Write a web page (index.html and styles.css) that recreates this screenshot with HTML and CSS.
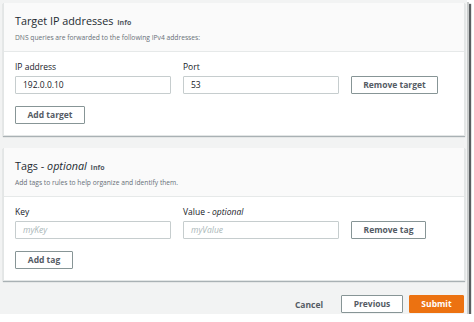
FILE: index.html
```html
<!DOCTYPE html>
<html>
<head>
<meta charset="utf-8">
<link rel="stylesheet" href="styles.css">
</head>
<body>
<div class="frame">
  <section class="card">
    <header class="card-header">
      <h2 class="title">Target IP addresses <span class="info">Info</span></h2>
      <p class="desc">DNS queries are forwarded to the following IPv4 addresses:</p>
    </header>
    <div class="card-body">
      <div class="row">
        <div class="field">
          <label class="label">IP address</label>
          <div class="input">192.0.0.10</div>
        </div>
        <div class="field">
          <label class="label">Port</label>
          <div class="input">53</div>
        </div>
        <button class="btn btn-remove-target">Remove target</button>
      </div>
      <button class="btn btn-add-target">Add target</button>
    </div>
  </section>

  <section class="card card-tags">
    <header class="card-header">
      <h2 class="title">Tags - <em>optional</em> <span class="info">Info</span></h2>
      <p class="desc">Add tags to rules to help organize and identify them.</p>
    </header>
    <div class="card-body">
      <div class="row">
        <div class="field">
          <label class="label">Key</label>
          <div class="input placeholder">myKey</div>
        </div>
        <div class="field">
          <label class="label">Value - <em>optional</em></label>
          <div class="input placeholder">myValue</div>
        </div>
        <button class="btn btn-remove-tag">Remove tag</button>
      </div>
      <button class="btn btn-add-tag">Add tag</button>
    </div>
  </section>

  <footer class="footer">
    <button class="link-btn">Cancel</button>
    <button class="btn btn-prev">Previous</button>
    <button class="btn btn-primary">Submit</button>
  </footer>
</div>
</body>
</html>
```

FILE: styles.css
```css
html, body {
  margin: 0;
  padding: 0;
  background: #ffffff;
}
body {
  font-family: "Open Sans", "Liberation Sans", sans-serif;
  color: #16191f;
}
.frame {
  box-sizing: border-box;
  width: 467px;
  height: 314px;
  background: #f2f3f3;
  padding: 3px 2px 0 3px;
  box-shadow: 2px 2px 0 #c9cccc, 4px 4px 1px #5a5e60;
}
.card {
  background: #ffffff;
  border: 1px solid #e3e6e6;
  border-top: 0;
  box-shadow: 0 1px 1px rgba(0, 28, 36, 0.3);
  box-sizing: border-box;
}
.card-tags {
  margin-top: 12px;
}
.card-header {
  background: #fafafa;
  border-bottom: 1px solid #e6e9e9;
  padding: 10px 11px 10px;
  height: 49px;
  box-sizing: border-box;
}
.title {
  margin: 0;
  font-size: 10.8px;
  line-height: 16px;
  font-weight: 400;
  color: #232a31;
}
.title em {
  font-style: italic;
}
.info {
  font-size: 7px;
  font-weight: 700;
  color: #545b64;
  margin-left: 1px;
}
.desc {
  margin: 1px 0 0;
  font-size: 6.7px;
  line-height: 11px;
  color: #687078;
}
.card-body {
  padding: 9px 11px 11px;
}
.row {
  display: flex;
  align-items: flex-end;
  gap: 12px;
  margin-bottom: 12px;
}
.field {
  width: 156px;
  display: flex;
  flex-direction: column;
  gap: 3px;
}
.label {
  font-size: 8.5px;
  line-height: 12px;
  color: #16191f;
}
.label em {
  font-style: italic;
}
.input {
  box-sizing: border-box;
  height: 18px;
  border: 1px solid #c6cdce;
  border-radius: 1px;
  padding: 0 7px;
  font-size: 8.5px;
  line-height: 16px;
  color: #16191f;
}
.input.placeholder {
  font-style: italic;
  color: #aab7b8;
}
.btn {
  box-sizing: border-box;
  height: 18px;
  border: 1px solid #879596;
  border-radius: 1px;
  background: #ffffff;
  color: #545b64;
  font-family: inherit;
  font-size: 8.5px;
  font-weight: 700;
  line-height: 16px;
  padding: 0;
  text-align: center;
}
.btn-remove-target { width: 87px; }
.btn-remove-tag { width: 75px; }
.btn-add-target { width: 70px; display: block; }
.btn-add-tag { width: 58px; display: block; }
.footer {
  display: flex;
  justify-content: flex-end;
  align-items: center;
  margin-top: 14px;
  padding-right: 1px;
}
.link-btn {
  border: 0;
  background: none;
  padding: 0;
  font-family: inherit;
  font-size: 8.5px;
  font-weight: 700;
  color: #545b64;
  margin-right: 18px;
}
.btn-prev {
  width: 62px;
  margin-right: 6px;
}
.btn-primary {
  width: 55px;
  background: #ec7211;
  border-color: #ec7211;
  color: #ffffff;
}
```
